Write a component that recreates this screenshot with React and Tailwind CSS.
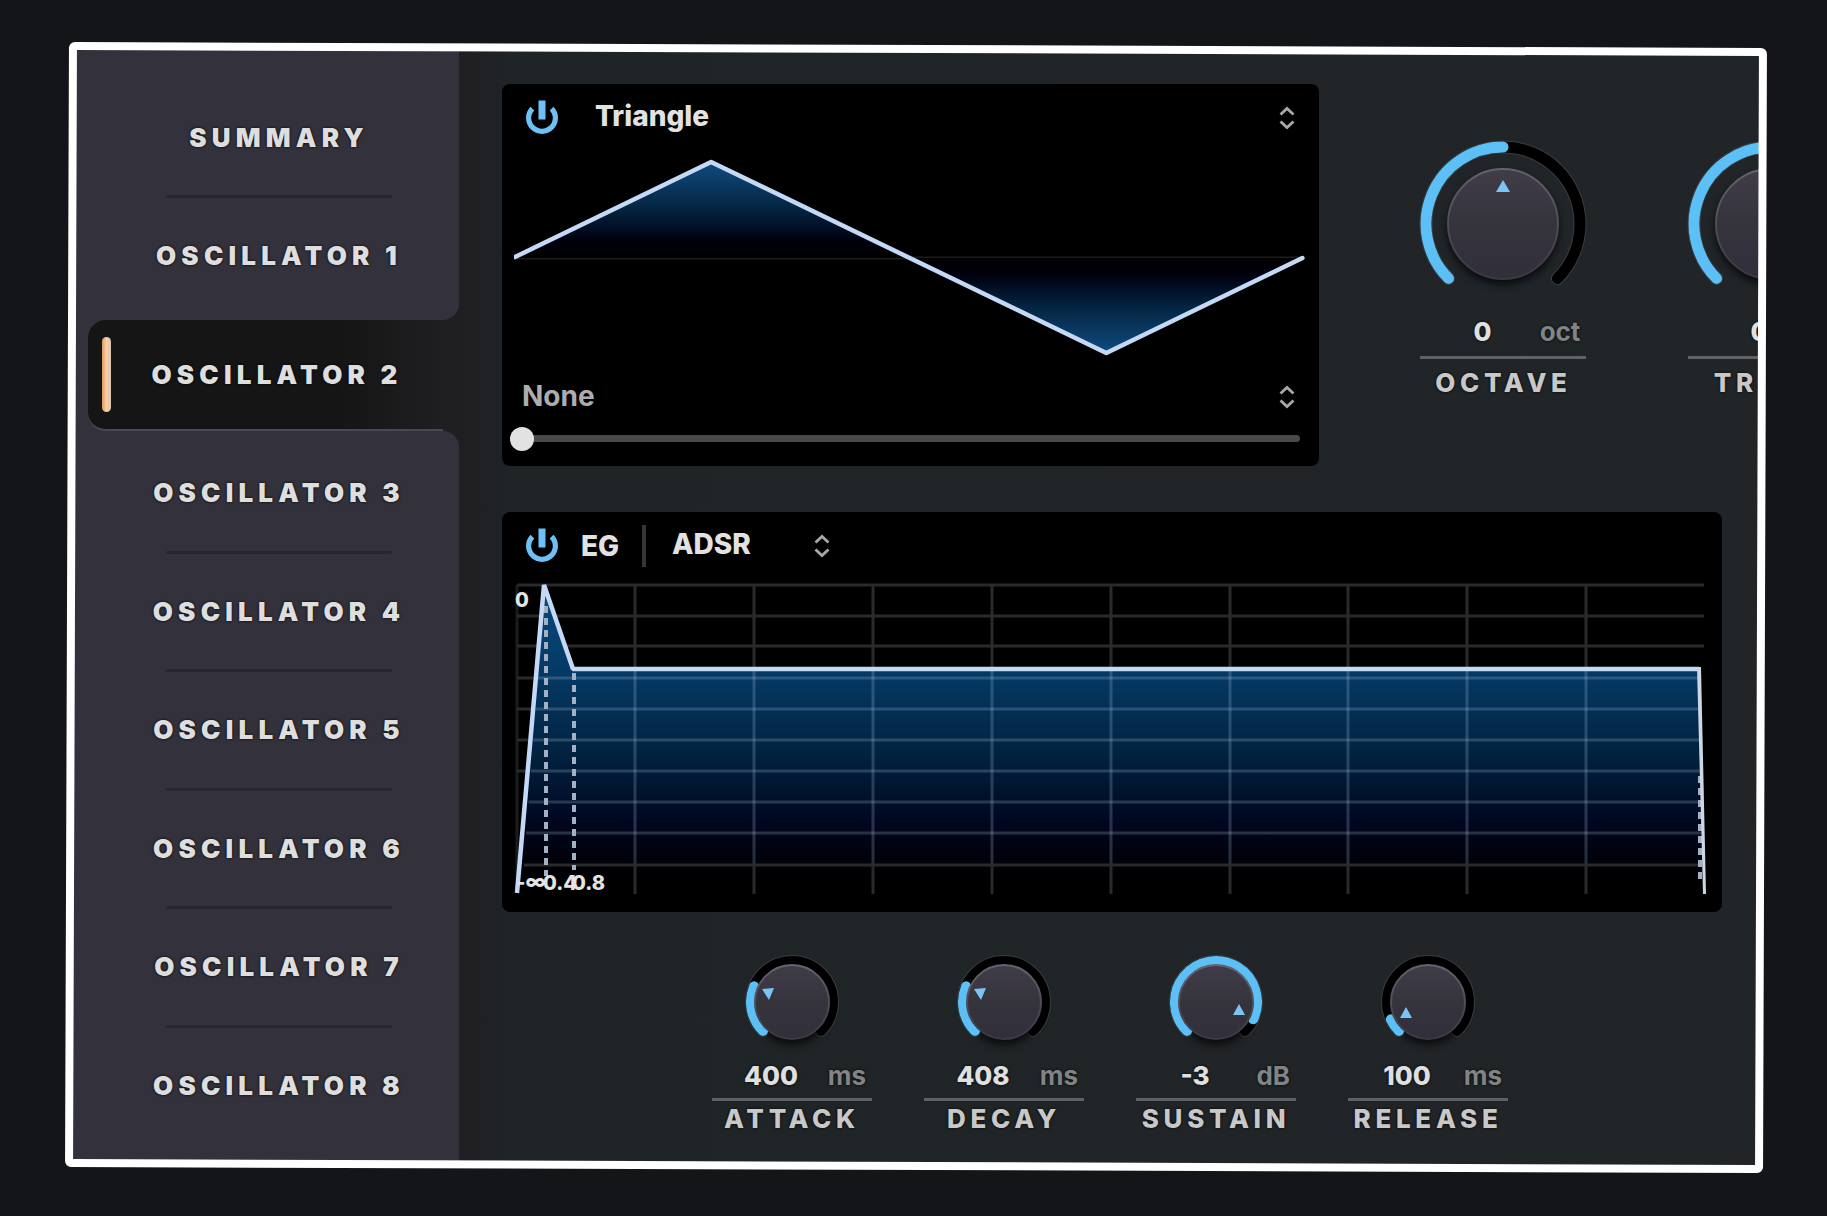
import { useState } from 'react';

const lowerItems = [
  'OSCILLATOR 3',
  'OSCILLATOR 4',
  'OSCILLATOR 5',
  'OSCILLATOR 6',
  'OSCILLATOR 7',
  'OSCILLATOR 8',
];

const envelopeKnobs = [
  { label: 'ATTACK', value: '400', unit: 'ms', amount: 0.25, pointer: 'M18 35 L30 34 L25 46 Z' },
  { label: 'DECAY', value: '408', unit: 'ms', amount: 0.25, pointer: 'M18 35 L30 34 L25 46 Z' },
  { label: 'SUSTAIN', value: '-3', unit: 'dB', amount: 0.926, pointer: 'M71 50 L77 61 L65 61 Z' },
  { label: 'RELEASE', value: '100', unit: 'ms', amount: 0.074, pointer: 'M26 53 L32 64 L20 64 Z' },
];

const PowerIcon = () => (
  <svg className="w-9 h-9" viewBox="0 0 36 36" fill="none" stroke="#6ec1f5">
    <path d="M8.4 8.6 A13.4 13.4 0 1 0 27.6 8.6" strokeWidth="5.2" />
    <path d="M18 0.5 V19.5" strokeWidth="7" />
  </svg>
);

const Chevrons = () => (
  <svg
    className="w-4 h-6 pointer-events-none"
    viewBox="0 0 16 24"
    fill="none"
    stroke="#a8a8a8"
    strokeWidth="2.8"
  >
    <path d="M1.5 8.5 L8 2.5 L14.5 8.5" />
    <path d="M1.5 15.5 L8 21.5 L14.5 15.5" />
  </svg>
);

const NavItem = ({ label, divider }) => (
  <li className="flex-1 min-h-[118px] flex flex-col items-center pl-7">
    <a
      href="#"
      className="flex-1 flex items-center text-[26px] font-black tracking-[0.2em] text-[#dedede] text-shadow-[0_0_3px_#000]"
    >
      {label}
    </a>
    <span className={`w-[226px] h-[3px] rounded ${divider ? 'bg-[#27262e]' : ''}`} />
  </li>
);

const Sidebar = () => (
  <nav className="w-[388px] shrink-0 flex flex-col bg-[#1f1e21]">
    <ul className="flex flex-col pt-[31px] pb-1 bg-[#33323c] rounded-br-2xl">
      <NavItem label="SUMMARY" divider />
      <NavItem label="OSCILLATOR 1" />
    </ul>

    {/* Selected oscillator */}
    <div className="h-[111px] pl-[17px] pr-4 bg-linear-to-r from-[#33323c] from-50% to-transparent to-50%">
      <a
        href="#"
        aria-current="page"
        className="h-full flex items-center pl-[14px] rounded-l-[18px] border-b-2 border-[#4a4855] bg-linear-to-r from-[#151515] from-70% to-[#1f1e21] text-[26px] font-black tracking-[0.2em] text-[#dedede] text-shadow-[0_0_3px_#000]"
      >
        <span className="w-[9px] h-[75px] rounded-full bg-linear-to-r from-[#e09a5c] via-[#fbd0a4] to-[#d8c4b6]" />
        <span className="flex-1 text-center">OSCILLATOR 2</span>
      </a>
    </div>

    <ul className="flex-1 flex flex-col pt-1 pb-5 bg-[#33323c] rounded-tr-2xl">
      {lowerItems.map((label, i) => (
        <NavItem key={label} label={label} divider={i < lowerItems.length - 1} />
      ))}
    </ul>
  </nav>
);

// Point on a circle, angle in degrees clockwise from the top
const polar = (c, r, deg) => {
  const a = (deg * Math.PI) / 180;
  return `${(c + r * Math.sin(a)).toFixed(2)} ${(c - r * Math.cos(a)).toFixed(2)}`;
};

const arc = (c, r, from, to) =>
  `M${polar(c, r, from)} A${r} ${r} 0 ${to - from > 180 ? 1 : 0} 1 ${polar(c, r, to)}`;

const Dial = ({ id, size, radius, body, stroke, amount, pointer }) => {
  const c = size / 2;
  return (
    <svg viewBox={`0 0 ${size} ${size}`} className="w-full h-full overflow-visible">
      <defs>
        <linearGradient id={`${id}-face`} x1="0" y1="0" x2="0" y2="1">
          <stop offset="0" stopColor="#403d49" />
          <stop offset="0.5" stopColor="#35333c" />
          <stop offset="1" stopColor="#312f3a" />
        </linearGradient>
        <linearGradient id={`${id}-rim`} x1="0" y1="0" x2="0" y2="1">
          <stop offset="0" stopColor="#65626d" />
          <stop offset="1" stopColor="#3a3842" />
        </linearGradient>
        <filter id={`${id}-shadow`} x="-30%" y="-30%" width="160%" height="160%">
          <feGaussianBlur stdDeviation="4" />
        </filter>
      </defs>
      <path d={arc(c, radius, -135, 135)} fill="none" stroke="#3a3c40" strokeWidth={stroke + 2} strokeLinecap="round" />
      <path d={arc(c, radius, -135, 135)} fill="none" stroke="#000" strokeWidth={stroke} strokeLinecap="round" />
      <circle cx={c} cy={c + 5} r={body} fill="#000" opacity="0.8" filter={`url(#${id}-shadow)`} />
      <path
        d={arc(c, radius, -135, -135 + 270 * amount)}
        fill="none"
        stroke="#5cc0f7"
        strokeWidth={stroke}
        strokeLinecap="round"
      />
      <circle cx={c} cy={c} r={body} fill={`url(#${id}-face)`} stroke={`url(#${id}-rim)`} strokeWidth="2" />
      <path d={pointer} fill="#7cc4f5" />
    </svg>
  );
};

const Knob = ({ label, value, unit, amount, pointer, large }) => {
  const id = label.toLowerCase();
  return (
    <div className={`shrink-0 flex flex-col items-center ${large ? 'w-[166px]' : 'w-[160px]'}`}>
      <div className={`relative ${large ? 'w-[168px] h-[168px] mb-2' : 'w-24 h-24 mb-[10px]'}`}>
        {large ? (
          <Dial id={id} size={168} radius={77} body={55} stroke={11} amount={amount} pointer={pointer} />
        ) : (
          <Dial id={id} size={96} radius={41} body={37} stroke={10} amount={amount} pointer={pointer} />
        )}
        <input
          id={id}
          type="range"
          min="0"
          max="1"
          step="any"
          defaultValue={amount}
          className="absolute inset-0 w-full h-full opacity-0 cursor-pointer"
        />
      </div>
      <div
        className={`w-full flex items-center leading-8 text-[26px] font-extrabold text-shadow-[0_0_3px_#000] border-b-[3px] border-[#5f6264] ${
          large ? 'pb-2' : 'pb-[6px]'
        }`}
      >
        <output htmlFor={id} className="flex-1 text-center text-[#e0e0e0]">
          {value}
        </output>
        <span className={`flex justify-end pr-[6px] font-bold text-[#818486] ${unit ? 'w-[42px]' : 'w-6'}`}>
          {unit}
        </span>
      </div>
      <label
        htmlFor={id}
        className={`leading-8 text-[26px] font-extrabold tracking-[0.18em] text-[#c8c8c8] text-shadow-[0_0_3px_#000] ${
          large ? 'pt-2' : 'pt-0.5'
        }`}
      >
        {label}
      </label>
    </div>
  );
};

const WavePanel = () => {
  const [wave, setWave] = useState('Triangle');
  return (
    <section className="w-[67%] shrink-0 bg-black rounded-lg px-3 pt-3">
      <div className="flex items-center h-11 pl-[10px] pr-3">
        <button type="button" aria-label="Oscillator power">
          <PowerIcon />
        </button>
        <div className="flex-1 relative flex items-center justify-end">
          <select
            aria-label="Waveform"
            value={wave}
            onChange={(e) => setWave(e.target.value)}
            className="absolute inset-x-0 appearance-none bg-transparent pl-[35px] pb-1 text-[28px] leading-8 font-extrabold text-[#e2e2e2]"
          >
            <option>Triangle</option>
          </select>
          <Chevrons />
        </div>
      </div>

      <svg className="w-full h-[224px]" viewBox="0 0 793 224" preserveAspectRatio="none">
        <defs>
          <linearGradient id="wave-up" x1="0" y1="0" x2="0" y2="1">
            <stop offset="0" stopColor="#104b80" />
            <stop offset="0.5" stopColor="#03233f" />
            <stop offset="0.82" stopColor="#00000f" />
            <stop offset="1" stopColor="#000" />
          </linearGradient>
          <linearGradient id="wave-down" x1="0" y1="1" x2="0" y2="0">
            <stop offset="0" stopColor="#104b80" />
            <stop offset="0.5" stopColor="#03233f" />
            <stop offset="0.82" stopColor="#00000f" />
            <stop offset="1" stopColor="#000" />
          </linearGradient>
        </defs>
        <path d="M1 118 H789" stroke="#1d1d1d" strokeWidth="3" />
        <path d="M1 118 L197 22 L394 118 Z" fill="url(#wave-up)" />
        <path d="M394 118 L592 213 L789 118 Z" fill="url(#wave-down)" />
        <path
          d="M1 117 L197 22 L592 213 L788 118"
          fill="none"
          stroke="#c3d9f6"
          strokeWidth="4.5"
          strokeLinecap="round"
          strokeLinejoin="round"
        />
      </svg>

      <div className="relative flex items-center justify-end h-11 pr-3 mt-[11px]">
        <select
          aria-label="Modifier"
          className="absolute inset-x-0 appearance-none bg-transparent pl-2 pb-0.5 text-[28px] leading-8 font-bold text-[#adadad]"
        >
          <option>None</option>
        </select>
        <Chevrons />
      </div>

      <div className="flex pr-[7px] -ml-1 pt-[7px] pb-4">
        <input
          type="range"
          aria-label="Modifier amount"
          min="0"
          max="100"
          defaultValue="0"
          className="w-full h-6 appearance-none bg-transparent [&::-webkit-slider-runnable-track]:h-[7px] [&::-webkit-slider-runnable-track]:rounded-full [&::-webkit-slider-runnable-track]:bg-[#4a4a4a] [&::-webkit-slider-thumb]:appearance-none [&::-webkit-slider-thumb]:w-6 [&::-webkit-slider-thumb]:h-6 [&::-webkit-slider-thumb]:-mt-2 [&::-webkit-slider-thumb]:rounded-full [&::-webkit-slider-thumb]:bg-[#e2e2e2]"
        />
      </div>
    </section>
  );
};

const EnvelopePanel = () => (
  <section className="bg-black rounded-lg px-3 pt-3 pb-4">
    <div className="flex items-center h-11 pl-[10px]">
      <button type="button" aria-label="Envelope power">
        <PowerIcon />
      </button>
      <h2 className="w-[82px] pl-[21px] text-[28px] leading-8 font-extrabold text-[#e2e2e2]">EG</h2>
      <span className="w-1 h-[42px] bg-[#363636]" />
      <div className="relative w-[184px] flex items-center justify-end">
        <select
          aria-label="Envelope type"
          className="absolute inset-x-0 appearance-none bg-transparent pl-[26px] pb-1 text-[28px] leading-8 font-extrabold text-[#e2e2e2]"
        >
          <option>ADSR</option>
        </select>
        <Chevrons />
      </div>
    </div>

    <svg className="w-full h-[316px] mt-3" viewBox="0 0 1196 316" preserveAspectRatio="none">
      <defs>
        <linearGradient id="env-fill" gradientUnits="userSpaceOnUse" x1="0" y1="5" x2="0" y2="313">
          <stop offset="0" stopColor="#0a4a80" />
          <stop offset="0.3" stopColor="#043863" />
          <stop offset="0.55" stopColor="#02223f" />
          <stop offset="0.76" stopColor="#000721" />
          <stop offset="0.92" stopColor="#000005" />
          <stop offset="1" stopColor="#000" />
        </linearGradient>
      </defs>
      <path d="M3 313 L30 5 L59 89 H1185 L1190 313 Z" fill="url(#env-fill)" />

      {/* Grid */}
      <g stroke="#b4d2f0" strokeOpacity="0.22" strokeWidth="3">
        {[121, 240, 359, 478, 597, 716, 834, 953, 1072].map((x) => (
          <path key={x} d={`M${x} 89 V285`} />
        ))}
        {[98, 129, 160, 191, 222, 253].map((y) => (
          <path key={y} d={`M${24 - (y - 98) / 13} ${y} H1187`} />
        ))}
      </g>
      <g stroke="#2a2a2a" strokeWidth="3">
        {[121, 240, 359, 478, 597, 716, 834, 953, 1072].map((x) => (
          <path key={x} d={`M${x} 5 V89 M${x} 285 V314`} />
        ))}
        <path d="M3 5 V313" stroke="#1c1c1c" />
        <path d="M3 5 H1190 M3 36 H27 M41 36 H1190 M3 66 H24 M52 66 H1190 M3 98 H20 M3 129 H17 M3 160 H14 M3 191 H12 M10 285 H1187" />
      </g>

      <g stroke="#a3b1c4" strokeWidth="4" strokeDasharray="7 5">
        <path d="M32 26 V296" />
        <path d="M60 93 V290" />
        <path d="M1186 196 V304" />
      </g>
      <path d="M3 313 L30 5 L59 89 H1185" fill="none" stroke="#c3d9f6" strokeWidth="4.5" strokeLinejoin="bevel" />
      <path d="M1183 87 H1187 L1192 314 H1189 Z" fill="#ccd6e4" />

      <g className="text-xl font-extrabold" fill="#e4e4e4">
        <text x="1" y="27">0</text>
        <text x="2" y="309">-∞</text>
        <text x="29" y="310">0.4</text>
        <text x="58" y="310">0.8</text>
      </g>
    </svg>
  </section>
);

export default function App() {
  return (
    <div className="min-h-screen flex bg-[#141519] pl-[71px] pr-[66px] pt-[49px] pb-[50px] font-['Inter','Open_Sans',sans-serif]">
      <div className="relative flex-1 min-w-0 flex">
        <div className="flex-1 min-w-0 flex overflow-hidden">
          <Sidebar />

          <main className="flex-1 min-w-0 flex flex-col pl-[43px] pr-[39px] pt-[35px] bg-linear-to-r from-[#201e22] via-[#1f2426] via-4% to-[#212528]">
            <div className="flex items-start gap-[101px]">
              <WavePanel />
              <div className="flex gap-[102px] pt-14">
                <Knob large label="OCTAVE" value="0" unit="oct" amount={0.5} pointer="M84 40 L91 52 H77 Z" />
                <Knob large label="TRANS" value="0" amount={0.5} pointer="M84 40 L91 52 H77 Z" />
              </div>
            </div>

            <div className="mt-[46px]">
              <EnvelopePanel />
            </div>

            <div className="flex justify-center gap-[52px] pr-1 mt-[42px]">
              {envelopeKnobs.map((knob) => (
                <Knob key={knob.label} {...knob} />
              ))}
            </div>
          </main>
        </div>

        {/* Hand-placed white frame around the synth */}
        <div className="absolute -inset-1 border-8 border-white rounded-md rotate-[0.2deg] pointer-events-none" />
      </div>
    </div>
  );
}
